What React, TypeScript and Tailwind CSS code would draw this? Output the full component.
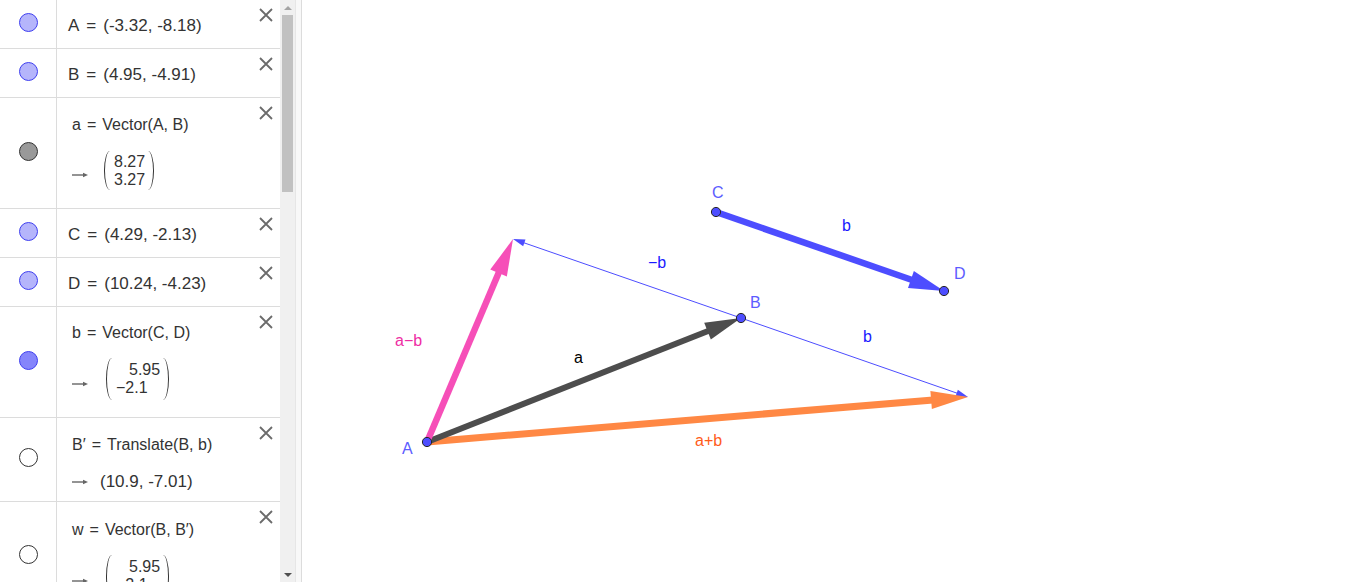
import React from "react";

type MarbleKind = "point" | "gray" | "vector" | "hidden";

function Marble({ kind }: { kind: MarbleKind }) {
  const cls = {
    point: "bg-[#b5b5fb] border-[#3f3ff0]",
    gray: "bg-[#999999] border-[#333333]",
    vector: "bg-[#8585fb] border-[#3f3ff0]",
    hidden: "bg-white border-[#333333]",
  }[kind];
  return <span className={`block h-[19px] w-[19px] rounded-full border ${cls}`} />;
}

function CloseX() {
  return (
    <svg width="14" height="14" viewBox="0 0 14 14" className="block">
      <path d="M1 1 L13 13 M13 1 L1 13" stroke="#6b6b6b" strokeWidth="1.8" fill="none" />
    </svg>
  );
}

function Row({ h, marble, children }: { h: string; marble: MarbleKind; children: React.ReactNode }) {
  return (
    <div className={`flex shrink-0 border-b border-[#dcdcdc] ${h}`}>
      <div className="flex w-[57px] shrink-0 items-center justify-center border-r border-[#dcdcdc] pb-[4px]">
        <Marble kind={marble} />
      </div>
      <div className="min-w-0 flex-1">{children}</div>
      <div className="shrink-0 pr-[7px] pt-[8px]">
        <CloseX />
      </div>
    </div>
  );
}

function Eq({ name, children }: { name: string; children: React.ReactNode }) {
  return (
    <div className="flex h-full items-center pl-[11px] pt-[3px] text-[17px] text-[#333]">
      <span>{name}</span>
      <span className="mx-[7px]">=</span>
      <span>{children}</span>
    </div>
  );
}

function Paren({ side, h }: { side: "l" | "r"; h: string }) {
  const cls =
    side === "l"
      ? "border-l-[1.4px] rounded-tl-[100%_50%] rounded-bl-[100%_50%]"
      : "border-r-[1.4px] rounded-tr-[100%_50%] rounded-br-[100%_50%]";
  return <span className={`block w-[6px] border-[#333] ${h} ${cls}`} />;
}

function Matrix({ top, bottom, h, topPad, botPad }: { top: string; bottom: string; h: string; topPad: string; botPad: string }) {
  return (
    <div className="flex items-center">
      <Paren side="l" h={h} />
      <div className="flex flex-col text-[16px] leading-[18px] text-[#333]">
        <span className={topPad}>{top}</span>
        <span className={botPad}>{bottom}</span>
      </div>
      <Paren side="r" h={h} />
    </div>
  );
}

function Formula({ name, def }: { name: string; def: string }) {
  return (
    <div className="flex h-[20px] items-center text-[16px] text-[#333]">
      <span>{name}</span>
      <span className="mx-[6px]">=</span>
      <span>{def}</span>
    </div>
  );
}

function Arrow() {
  return (
    <svg width="16" height="8" viewBox="0 0 16 8" className="block">
      <path d="M0 4 H12.5" stroke="#666" strokeWidth="1.4" />
      <path d="M11 1.8 L16 4 L11 6.2 Z" fill="#666" />
    </svg>
  );
}

function AlgebraView() {
  return (
    <div className="flex h-full w-[302px] shrink-0 border-r border-[#dcdcdc] font-['Liberation_Sans',Arial,sans-serif]">
      <div className="flex h-full w-[280px] flex-col overflow-hidden">
        <Row h="h-[49px]" marble="point">
          <Eq name="A">(-3.32, -8.18)</Eq>
        </Row>
        <Row h="h-[49px]" marble="point">
          <Eq name="B">(4.95, -4.91)</Eq>
        </Row>
        <Row h="h-[111px]" marble="gray">
          <div className="flex flex-col pl-[15px] pt-[17px]">
            <Formula name="a" def="Vector(A, B)" />
            <div className="mt-[16px] flex items-center">
              <span className="mt-[8px] flex">
                <Arrow />
              </span>
              <span className="ml-[16px]">
                <Matrix top="8.27" bottom="3.27" h="h-[39px]" topPad="pl-[4px] pr-[3px]" botPad="pl-[4px] pr-[3px]" />
              </span>
            </div>
          </div>
        </Row>
        <Row h="h-[49px]" marble="point">
          <Eq name="C">(4.29, -2.13)</Eq>
        </Row>
        <Row h="h-[49px]" marble="point">
          <Eq name="D">(10.24, -4.23)</Eq>
        </Row>
        <Row h="h-[111px]" marble="vector">
          <div className="flex flex-col pl-[15px] pt-[16px]">
            <Formula name="b" def="Vector(C, D)" />
            <div className="mt-[15px] flex items-center">
              <span className="mt-[10px] flex">
                <Arrow />
              </span>
              <span className="ml-[18px]">
                <Matrix top="5.95" bottom="−2.1" h="h-[42px]" topPad="pl-[17px] pr-[3px]" botPad="pl-[4px]" />
              </span>
            </div>
          </div>
        </Row>
        <Row h="h-[84px]" marble="hidden">
          <div className="flex flex-col pl-[15px] pt-[17px]">
            <Formula name="B′" def="Translate(B, b)" />
            <div className="mt-[17px] flex h-[20px] items-center text-[17px] text-[#333]">
              <Arrow />
              <span className="ml-[12px]">(10.9, -7.01)</span>
            </div>
          </div>
        </Row>
        <Row h="h-[110px]" marble="hidden">
          <div className="flex flex-col pl-[15px] pt-[18px]">
            <Formula name="w" def="Vector(B, B′)" />
            <div className="mt-[15px] flex items-center">
              <span className="mt-[10px] flex">
                <Arrow />
              </span>
              <span className="ml-[18px]">
                <Matrix top="5.95" bottom="−2.1" h="h-[42px]" topPad="pl-[17px] pr-[3px]" botPad="pl-[4px]" />
              </span>
            </div>
          </div>
        </Row>
      </div>
      <div className="flex h-full w-[15px] shrink-0 flex-col bg-[#f0f0f0]">
        <div className="flex h-[15px] items-center justify-center">
          <span className="block border-x-[4px] border-b-[4px] border-x-transparent border-b-[#a3a3a3]" />
        </div>
        <div className="mx-[2px] h-[177px] bg-[#c1c1c1]" />
        <div className="flex-1" />
        <div className="flex h-[15px] items-center justify-center">
          <span className="block border-x-[4px] border-t-[4px] border-x-transparent border-t-[#505050]" />
        </div>
      </div>
      <div className="h-full w-[6px] shrink-0 border-l border-[#e6e6e6] bg-[#f8f8f8]" />
    </div>
  );
}

type P = [number, number];

function Vec({ from, to, color, w, len, hw }: { from: P; to: P; color: string; w: number; len: number; hw: number }) {
  const dx = to[0] - from[0];
  const dy = to[1] - from[1];
  const L = Math.hypot(dx, dy);
  const ux = dx / L;
  const uy = dy / L;
  const bx = to[0] - ux * len;
  const by = to[1] - uy * len;
  const px = -uy * hw;
  const py = ux * hw;
  return (
    <g>
      <line x1={from[0]} y1={from[1]} x2={bx + ux * 2} y2={by + uy * 2} stroke={color} strokeWidth={w} />
      <polygon points={`${to[0]},${to[1]} ${bx + px},${by + py} ${bx - px},${by - py}`} fill={color} />
    </g>
  );
}

function Pt({ at }: { at: P }) {
  return <circle cx={at[0]} cy={at[1]} r={4.6} fill="#4d4dff" stroke="#262626" strokeWidth={1} />;
}

function Graphics() {
  const A: P = [427, 442];
  const B: P = [741, 318];
  const C: P = [716, 212];
  const D: P = [944, 291];
  const Bm: P = [513, 239];
  const Bp: P = [968, 397];
  return (
    <div className="h-full flex-1 bg-white">
      <svg width="1064" height="582" viewBox="302 0 1064 582" className="block font-['Liberation_Sans',Arial,sans-serif]">
        <Vec from={B} to={Bm} color="#4d4dff" w={1} len={12} hw={3.6} />
        <Vec from={B} to={Bp} color="#4d4dff" w={1} len={12} hw={3.6} />
        <Vec from={A} to={Bp} color="#ff8844" w={7} len={37} hw={9} />
        <Vec from={A} to={B} color="#4d4d4d" w={6} len={36} hw={9} />
        <Vec from={A} to={Bm} color="#f64fb8" w={6.5} len={37} hw={9} />
        <Vec from={C} to={D} color="#4d4dff" w={6.5} len={35} hw={9} />
        <Pt at={A} />
        <Pt at={B} />
        <Pt at={C} />
        <Pt at={D} />
        <g fontSize="16">
          <text x="712" y="198" fill="#5c5cff">C</text>
          <text x="954" y="279" fill="#5c5cff">D</text>
          <text x="750" y="308" fill="#5c5cff">B</text>
          <text x="402" y="454" fill="#5c5cff">A</text>
          <text x="842" y="231" fill="#1a1aff">b</text>
          <text x="863" y="342" fill="#1a1aff">b</text>
          <text x="648" y="268" fill="#1a1aff">−b</text>
          <text x="395" y="346" fill="#ee2ea3">a−b</text>
          <text x="574" y="363" fill="#000000">a</text>
          <text x="695" y="446" fill="#ff5c1a">a+b</text>
        </g>
      </svg>
    </div>
  );
}

export default function App() {
  return (
    <div className="flex h-[582px] w-[1366px] overflow-hidden bg-white">
      <AlgebraView />
      <Graphics />
    </div>
  );
}
